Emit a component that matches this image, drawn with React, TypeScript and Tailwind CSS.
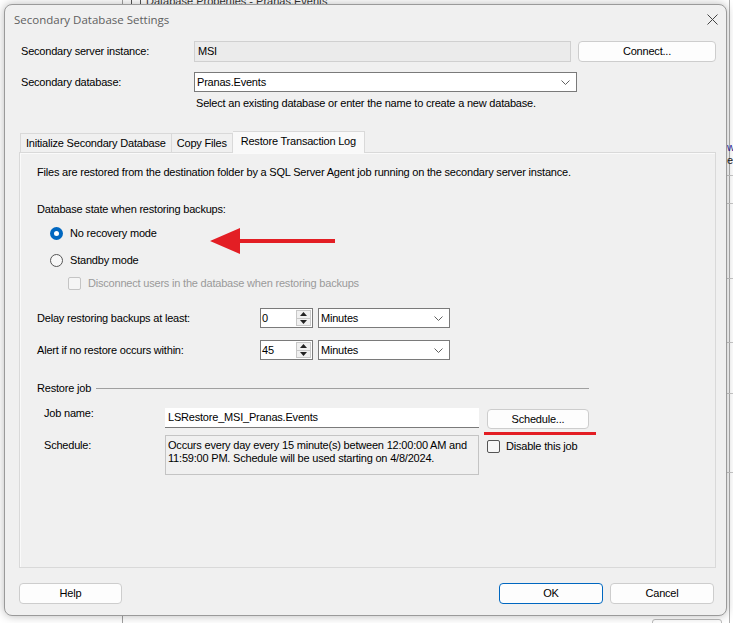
import React from "react";

const sans = { fontFamily: '"Liberation Sans", Arial, sans-serif' };

const Chevron = () => (
  <svg width="9" height="5" viewBox="0 0 9 5" className="shrink-0">
    <path d="M0.5 0.5 L4.5 4.5 L8.5 0.5" fill="none" stroke="#606060" strokeWidth="1" />
  </svg>
);

const Button = ({ label, className }: { label: string; className: string }) => (
  <div
    className={`flex items-center justify-center rounded-[4px] border bg-[#fdfdfd] text-[11px] text-black ${className}`}
  >
    {label}
  </div>
);

const Combo = ({ value, className }: { value: string; className: string }) => (
  <div
    className={`flex items-center justify-between border border-[#7a7a7a] bg-white pl-[2px] pr-[6px] text-[11px] text-black ${className}`}
  >
    <span>{value}</span>
    <Chevron />
  </div>
);

const Spin = ({ value }: { value: string }) => (
  <div className="flex h-[20px] w-[53px] items-stretch border border-[#7a7a7a] bg-white">
    <div className="flex flex-1 items-center pl-[1px] text-[11px] leading-none">{value}</div>
    <div className="my-[1px] mr-[1px] flex w-[15px] flex-col border border-[#c8c8c8] bg-[#f0f0f0]">
      <div className="flex flex-1 items-center justify-center border-b border-[#c8c8c8]">
        <svg width="7" height="4" viewBox="0 0 7 4">
          <path d="M0 4 L3.5 0 L7 4 Z" fill="#222" />
        </svg>
      </div>
      <div className="flex flex-1 items-center justify-center">
        <svg width="7" height="4" viewBox="0 0 7 4">
          <path d="M0 0 L3.5 4 L7 0 Z" fill="#222" />
        </svg>
      </div>
    </div>
  </div>
);

const Radio = ({ checked, label }: { checked?: boolean; label: string }) => (
  <div className="flex h-[16px] items-center">
    {checked ? (
      <div className="ml-[13px] flex h-[13px] w-[13px] items-center justify-center rounded-full bg-[#0067c0]">
        <div className="h-[5px] w-[5px] rounded-full bg-white" />
      </div>
    ) : (
      <div className="ml-[13px] h-[13px] w-[13px] rounded-full border border-[#555] bg-[#f7f7f7]" />
    )}
    <span className="ml-[7px] text-[11px]">{label}</span>
  </div>
);

const Checkbox = ({ disabled }: { disabled?: boolean }) => (
  <div
    className={`h-[13px] w-[13px] shrink-0 rounded-[2px] border ${
      disabled ? "border-[#c4c4c4] bg-[#f5f5f5]" : "border-[#555] bg-[#f7f7f7]"
    }`}
  />
);

export default function App() {
  return (
    <div className="relative h-[623px] w-[733px] overflow-hidden bg-white text-black" style={sans}>
      {/* window behind */}
      <div className="absolute left-[122px] top-0 h-full w-px bg-[#a0a0a0]" />
      <div className="absolute left-[131px] top-[-5px] flex items-center gap-[5px] text-[11px] leading-[12px] text-[#333]">
        <div className="h-[10px] w-[10px] rounded-[2px] border border-[#555]" />
        <span>Database Properties - Pranas.Events</span>
      </div>
      <div className="absolute left-[729px] top-0 h-full w-px bg-[#b0b0b0]" />
      <div className="absolute left-[727px] top-[141px] flex flex-col text-[11px] leading-[13px] text-[#1a1a1a]">
        <span className="text-[#2a2aa0]">w</span>
        <span>e</span>
      </div>
      {[175, 203, 278, 342, 393, 472].map((y) => (
        <div key={y} className="absolute left-[722px] h-px w-[11px] bg-[#c8c8c8]" style={{ top: y }} />
      ))}
      <div className="absolute left-[652px] top-[619px] h-[10px] w-[70px] rounded-[3px] border border-[#bbb]" />

      {/* dialog */}
      <div className="absolute left-[4px] top-[4px] flex h-[612px] w-[723px] flex-col rounded-[8px] border border-[#9a9a9a] bg-[#f0f0f0] tracking-[-0.2px] shadow-[0_0_10px_rgba(0,0,0,0.28)]">
        <div className="flex h-[29px] shrink-0 items-center justify-between pl-[9px] pr-[6px]">
          <span
            className="text-[11.5px] tracking-normal text-[#5f5f5f]"
            style={{ fontFamily: '"Open Sans", "Noto Sans", sans-serif' }}
          >
            Secondary Database Settings
          </span>
          <svg width="11" height="11" viewBox="0 0 11 11" className="mr-[2px]">
            <path d="M0.5 0.5 L10.5 10.5 M10.5 0.5 L0.5 10.5" stroke="#444" strokeWidth="1" />
          </svg>
        </div>

        <div className="mt-[7px] flex h-[21px] items-center pl-[16px] text-[11px]">
          <span className="w-[173px]">Secondary server instance:</span>
          <div className="flex h-[21px] w-[377px] items-center border border-[#d0d0d0] bg-[#ebebeb] pl-[3px]">
            MSI
          </div>
          <Button label="Connect..." className="ml-[7px] h-[21px] w-[138px] border-[#cdcdcd]" />
        </div>

        <div className="mt-[10px] flex h-[20px] items-center pl-[16px] text-[11px]">
          <span className="w-[173px]">Secondary database:</span>
          <Combo value="Pranas.Events" className="h-[20px] w-[383px]" />
        </div>
        <div className="ml-[191px] mt-[4px] h-[14px] text-[11px] leading-[14px]">
          Select an existing database or enter the name to create a new database.
        </div>

        {/* tabs */}
        <div className="ml-[15px] mt-[21px] flex h-[21px] items-end text-[11px]">
          <div className="flex h-[19px] items-center border border-b-0 border-[#d9d9d9] bg-[#f0f0f0] px-[5px]">
            Initialize Secondary Database
          </div>
          <div className="flex h-[19px] items-center border border-b-0 border-l-0 border-[#d9d9d9] bg-[#f0f0f0] px-[5px]">
            Copy Files
          </div>
          <div className="relative z-10 mb-[-1px] flex h-[22px] items-center border border-b-0 border-l-0 border-[#d9d9d9] bg-[#f9f9f9] px-[8px] pb-[2px]">
            Restore Transaction Log
          </div>
        </div>

        <div className="relative ml-[14px] flex h-[416px] w-[697px] flex-col border border-[#d9d9d9] bg-[#f0f0f0] pl-[17px] text-[11px] shadow-[inset_1px_1px_0_#fafafa]">
          <div className="mt-[12px] h-[14px] whitespace-nowrap leading-[14px]">
            Files are restored from the destination folder by a SQL Server Agent job running on the secondary server
            instance.
          </div>
          <div className="mt-[23px] h-[14px] leading-[14px]">Database state when restoring backups:</div>
          <div className="mt-[9px]">
            <Radio checked label="No recovery mode" />
          </div>
          <div className="mt-[11px]">
            <Radio label="Standby mode" />
          </div>
          <div className="mt-[8px] flex h-[14px] items-center pl-[31px]">
            <Checkbox disabled />
            <span className="ml-[7px] text-[#9a9a9a]">Disconnect users in the database when restoring backups</span>
          </div>

          <div className="mt-[18px] flex h-[20px] items-center">
            <span className="w-[223px]">Delay restoring backups at least:</span>
            <Spin value="0" />
            <Combo value="Minutes" className="ml-[5px] h-[20px] w-[132px]" />
          </div>
          <div className="mt-[12px] flex h-[20px] items-center">
            <span className="w-[223px]">Alert if no restore occurs within:</span>
            <Spin value="45" />
            <Combo value="Minutes" className="ml-[5px] h-[20px] w-[132px]" />
          </div>

          <div className="mt-[21px] flex h-[14px] w-[552px] items-center">
            <span>Restore job</span>
            <div className="ml-[5px] h-px flex-1 bg-[#a0a0a0]" />
          </div>

          <div className="mt-[13px] flex">
            <div className="flex w-[128px] flex-col pl-[7px]">
              <span className="mt-[-2px] h-[14px] leading-[14px]">Job name:</span>
              <span className="mt-[18px] h-[14px] leading-[14px]">Schedule:</span>
            </div>
            <div className="flex w-[314px] flex-col">
              <div className="flex h-[20px] items-center border-b border-[#7a7a7a] bg-white pl-[3px]">
                LSRestore_MSI_Pranas.Events
              </div>
              <div className="mt-[7px] h-[40px] whitespace-nowrap border border-[#c4c4c4] bg-[#f0f0f0] pl-[2px] pt-[3px] leading-[13px]">
                Occurs every day every 15 minute(s) between 12:00:00 AM and
                <br />
                11:59:00 PM. Schedule will be used starting on 4/8/2024.
              </div>
            </div>
            <div className="relative ml-[8px] flex w-[102px] flex-col">
              <Button label="Schedule..." className="mt-[1px] h-[20px] w-[102px] border-[#cdcdcd]" />
              <div className="absolute left-[-3px] top-[24px] h-[3px] w-[112px] bg-[#e31e24]" />
              <div className="mt-[9px] flex items-center">
                <Checkbox />
                <span className="ml-[6px]">Disable this job</span>
              </div>
            </div>
          </div>

          {/* annotation arrow */}
          <svg className="absolute left-[190px] top-[73px]" width="126" height="30" viewBox="0 0 126 30">
            <path d="M0 15 L30 2 L30 13 L125 13 L125 17 L30 17 L30 28 Z" fill="#e31e24" />
          </svg>
        </div>

        <div className="mt-[15px] flex h-[21px] items-center pl-[14px] pr-[12px]">
          <Button label="Help" className="h-[21px] w-[103px] border-[#cdcdcd]" />
          <div className="flex-1" />
          <Button label="OK" className="h-[21px] w-[104px] border-[#0067c0]" />
          <Button label="Cancel" className="ml-[7px] h-[21px] w-[104px] border-[#cdcdcd]" />
        </div>
      </div>
    </div>
  );
}
